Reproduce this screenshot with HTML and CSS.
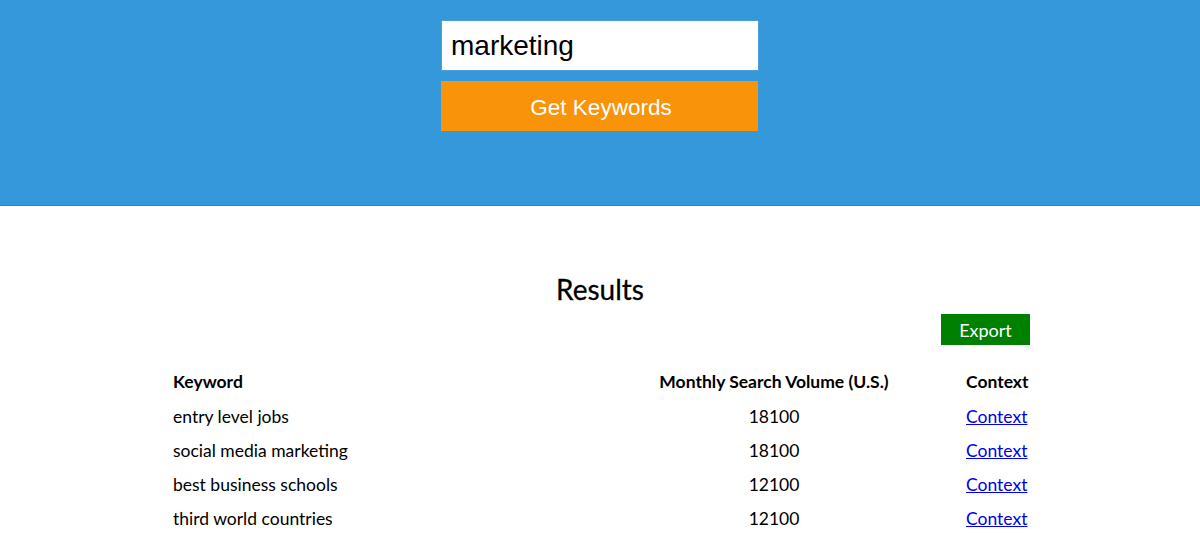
FILE: index.html
```html
<!DOCTYPE html>
<html>
<head>
<meta charset="utf-8">
<link rel="stylesheet" href="styles.css">
</head>
<body>
<header class="hero">
  <form class="search">
    <input class="search-input" type="text" value="marketing">
    <button class="search-btn" type="button">Get Keywords</button>
  </form>
</header>
<main class="results">
  <h2 class="results-title">Results</h2>
  <div class="toolbar"><button class="export-btn" type="button">Export</button></div>
  <table class="kw-table">
    <colgroup><col class="c1"><col class="c2"><col class="c3"></colgroup>
    <thead>
      <tr><th class="kw">Keyword</th><th class="vol">Monthly Search Volume (U.S.)</th><th class="ctx">Context</th></tr>
    </thead>
    <tbody>
      <tr><td class="kw">entry level jobs</td><td class="vol">18100</td><td class="ctx"><a href="#">Context</a></td></tr>
      <tr><td class="kw">social media marketing</td><td class="vol">18100</td><td class="ctx"><a href="#">Context</a></td></tr>
      <tr><td class="kw">best business schools</td><td class="vol">12100</td><td class="ctx"><a href="#">Context</a></td></tr>
      <tr><td class="kw">third world countries</td><td class="vol">12100</td><td class="ctx"><a href="#">Context</a></td></tr>
    </tbody>
  </table>
</main>
</body>
</html>
```
FILE: styles.css
```css
html, body { margin: 0; padding: 0; background: #fff; }
body { font-family: "Lato", "Noto Sans", sans-serif; color: #000; }

.hero {
  background: #3598db;
  height: 205px;
  border-bottom: 1px solid #2f86c2;
  display: flex;
  justify-content: center;
}
.search {
  margin-top: 20px;
  width: 318px;
  display: flex;
  flex-direction: column;
  gap: 10px;
}
.search-input {
  box-sizing: border-box;
  height: 51px;
  width: 318px;
  margin: 0;
  border: 1px solid #4a9fdc;
  padding: 0 9px;
  font-family: "Liberation Sans", Arial, sans-serif;
  font-size: 28px;
  color: #000;
  background: #fff;
  outline: none;
}
.search-btn {
  box-sizing: border-box;
  height: 50px;
  width: 317px;
  margin: 0;
  border: none;
  background: #f8930a;
  color: #fff;
  font-family: "Liberation Sans", Arial, sans-serif;
  font-size: 22.5px;
  padding: 4px 0 0 3px;
}

.results {
  width: 860px;
  margin: 0 auto;
}
.results-title {
  margin: 66px 0 0;
  text-align: center;
  font-weight: 400;
  font-size: 28px;
  line-height: 34px;
  -webkit-text-stroke: 0.3px #000;
}
.toolbar {
  display: flex;
  justify-content: flex-end;
  margin-top: 8px;
}
.export-btn {
  width: 89px;
  height: 31px;
  border: none;
  background: #008000;
  color: #fff;
  font-family: "Lato", "Noto Sans", sans-serif;
  font-size: 18px;
  padding: 0;
}
.kw-table {
  width: 860px;
  table-layout: fixed;
  border-collapse: collapse;
  margin-top: 20px;
}
.c1 { width: 415px; }
.c2 { width: 378px; }
.c3 { width: 67px; }
.kw-table th, .kw-table td {
  padding: 0 3px;
  height: 34px;
  font-size: 17.5px;
  line-height: 34px;
  white-space: nowrap;
}
.kw-table th { font-weight: 700; height: 35px; line-height: 33px; vertical-align: top; }
.kw-table td { font-weight: 400; }
.kw { text-align: left; }
.vol { text-align: center; }
.ctx { text-align: right; }
.kw-table a { color: #0000ee; text-decoration: underline; }
```
